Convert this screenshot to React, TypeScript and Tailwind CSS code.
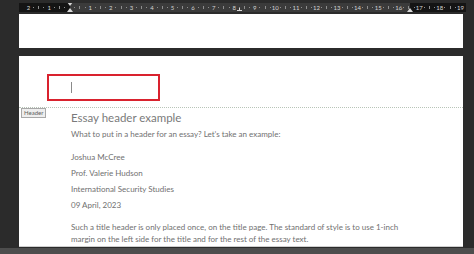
import React from "react";

const QUARTER = 5.15;

// one quarter cell of the ruler scale, its mark centred
function Cell({ n, q }: { n: number; q: number }) {
  let mark: React.ReactNode = null;
  if (q === 0 && n !== 0) {
    mark = <span className="text-[6px] leading-none text-[#d4d4d4]">{Math.abs(n)}</span>;
  } else if (q === 2) {
    mark = <span className="h-[3px] w-px bg-[#8e8e8e]" />;
  } else if (q !== 0) {
    mark = <span className="h-px w-px bg-[#8e8e8e]" />;
  }
  return (
    <div className="flex h-full shrink-0 items-center justify-center" style={{ width: QUARTER }}>
      {mark}
    </div>
  );
}

function Ruler() {
  const cells: React.ReactNode[] = [];
  for (let n = -2; n <= 19; n++) {
    for (let q = 0; q < 4; q++) {
      if (n === 19 && q > 0) break;
      cells.push(<Cell key={n + "-" + q} n={n} q={q} />);
    }
  }
  return (
    <div className="relative ml-[19px] mt-[3px] h-[9px] w-[447px] overflow-hidden bg-[#3b3b3b]">
      <div className="absolute inset-y-0 left-0 w-[51px] bg-[#141414]" />
      <div className="absolute inset-y-0 right-0 w-[56px] bg-[#141414]" />
      <div className="relative flex h-full pl-[7px]">{cells}</div>
      {/* indent and tab markers */}
      <span className="absolute left-[48px] top-[-1px] h-0 w-0 border-x-[3px] border-t-[4px] border-x-transparent border-t-[#d8d8d8]" />
      <span className="absolute left-[48px] top-[5px] h-0 w-0 border-x-[3px] border-b-[4px] border-x-transparent border-b-[#d8d8d8]" />
      <span className="absolute left-[388px] top-[5px] h-0 w-0 border-x-[3px] border-b-[4px] border-x-transparent border-b-[#d8d8d8]" />
      <span className="absolute left-[220px] top-[5px] h-[3px] w-px bg-[#d8d8d8]" />
      <span className="absolute left-[218px] top-[7px] h-px w-[5px] bg-[#d8d8d8]" />
    </div>
  );
}

export default function App() {
  return (
    <div
      className="flex h-[254px] w-[474px] flex-col overflow-hidden bg-[#2b2b2b]"
      style={{ fontFamily: "Lato, 'Open Sans', sans-serif" }}
    >
      <Ruler />
      <div className="ml-[19px] mt-[2px] h-[34px] w-[444px] bg-white" />
      <div className="relative ml-[19px] mt-[8px] h-[191px] w-[444px] border-b border-[#cfcfcf] bg-white">
        <div className="h-[52px] border-b border-dotted border-[#b8c4b8] pl-[28px] pt-[18px]">
          <div className="flex h-[27px] w-[113px] items-center border-2 border-[#d9222e] pl-[22px]">
            <span className="h-[11px] w-px bg-[#8a8a8a]" />
          </div>
        </div>
        <span className="absolute left-[2px] top-[52px] border border-[#a8a8a8] bg-[#eeeeee] px-[2px] text-[6px] leading-[8px] text-[#606060]">
          Header
        </span>
        <div className="flex flex-col pl-[52px] text-[8px] leading-[11px] text-[#707070]">
          <h1 className="mt-[2px] text-[11.5px] leading-[15px] text-[#7a7a7a]">
            Essay header example
          </h1>
          <p className="mt-[4px]">What to put in a header for an essay? Let’s take an example:</p>
          <div className="mt-[12px] flex flex-col gap-[5px]">
            <p>Joshua McCree</p>
            <p>Prof. Valerie Hudson</p>
            <p>International Security Studies</p>
            <p>09 April, 2023</p>
          </div>
          <p className="mt-[10px] w-[345px] leading-[12px]">
            Such a title header is only placed once, on the title page. The standard of style is to use 1-inch margin on the left side for the title and for the rest of the essay text.
          </p>
        </div>
      </div>
      <div className="mt-[1px] flex-1 bg-[#4d4d4d]" />
    </div>
  );
}
